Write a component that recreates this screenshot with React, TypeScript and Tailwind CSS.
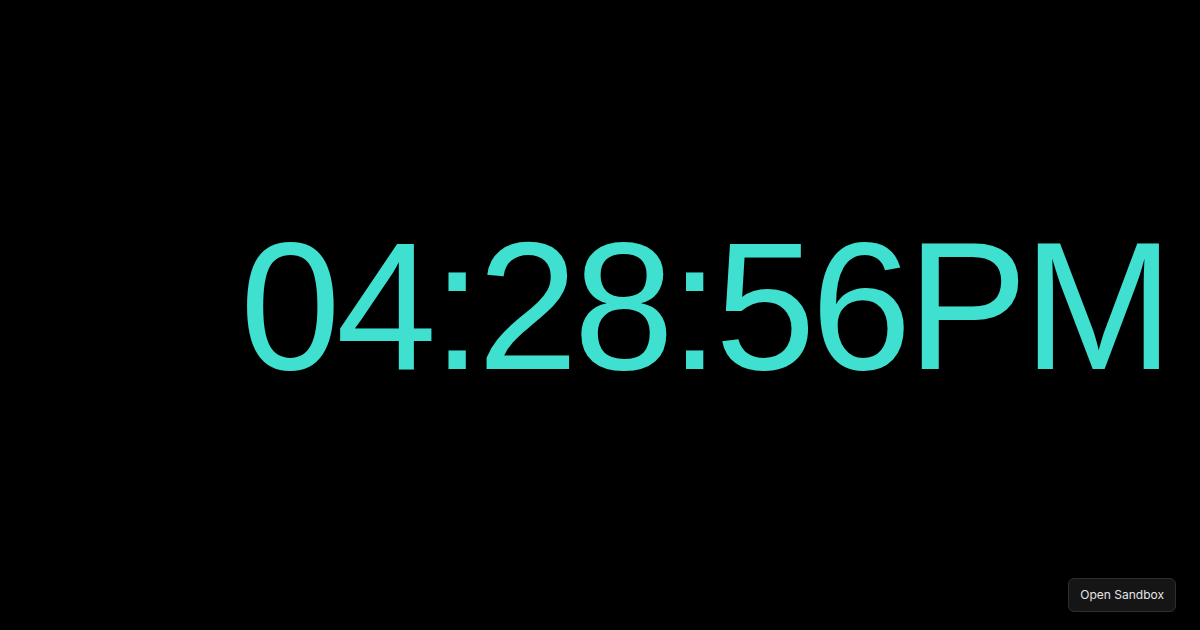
export default function App() {
  return (
    <div className="relative h-[630px] w-full bg-black overflow-hidden">
      <div className="flex h-full items-center justify-end pr-[31px] pb-[18px]">
        <span className="font-['Liberation_Sans',Arial,sans-serif] text-[181px] leading-none tracking-[-0.026em] text-[#40e0d0] whitespace-nowrap">
          04:28:56PM
        </span>
      </div>
      <button className="absolute right-[24px] bottom-[18px] h-[34px] px-[11px] rounded-md border border-[#2e2e2e] bg-[#151515] text-[12px] text-[#e6e6e6] font-['Inter',sans-serif]">
        Open Sandbox
      </button>
    </div>
  );
}
